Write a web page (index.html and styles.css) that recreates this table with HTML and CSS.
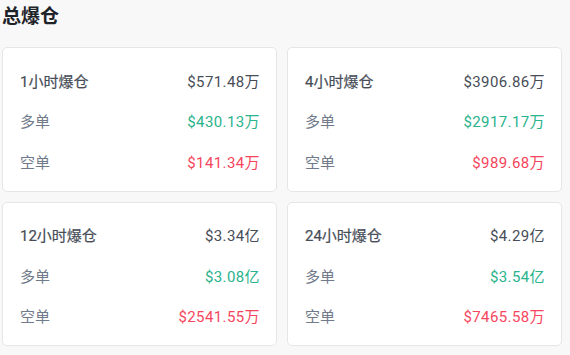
FILE: index.html
```html
<!DOCTYPE html>
<html lang="zh">
<head>
<meta charset="utf-8">
<link rel="stylesheet" href="styles.css">
</head>
<body>
<div class="page">
  <h2 class="title">总爆仓</h2>
  <div class="grid">
    <div class="card">
      <div class="row head"><span>1小时爆仓</span><span class="val">$571.48万</span></div>
      <div class="row"><span>多单</span><span class="val up">$430.13万</span></div>
      <div class="row"><span>空单</span><span class="val down">$141.34万</span></div>
    </div>
    <div class="card">
      <div class="row head"><span>4小时爆仓</span><span class="val">$3906.86万</span></div>
      <div class="row"><span>多单</span><span class="val up">$2917.17万</span></div>
      <div class="row"><span>空单</span><span class="val down">$989.68万</span></div>
    </div>
    <div class="card">
      <div class="row head"><span>12小时爆仓</span><span class="val">$3.34亿</span></div>
      <div class="row"><span>多单</span><span class="val up">$3.08亿</span></div>
      <div class="row"><span>空单</span><span class="val down">$2541.55万</span></div>
    </div>
    <div class="card">
      <div class="row head"><span>24小时爆仓</span><span class="val">$4.29亿</span></div>
      <div class="row"><span>多单</span><span class="val up">$3.54亿</span></div>
      <div class="row"><span>空单</span><span class="val down">$7465.58万</span></div>
    </div>
  </div>
</div>
</body>
</html>
```
FILE: styles.css
```css
html, body {
  margin: 0;
  padding: 0;
  background: #f8f8f8;
}
body {
  font-family: Roboto, "Noto Sans CJK SC", sans-serif;
  color: #707a8a;
}
.page {
  width: 560px;
  padding: 0 8px 0 2px;
}
.title {
  margin: 0;
  height: 32px;
  line-height: 30px;
  font-size: 19px;
  font-weight: 700;
  color: #1e2329;
  font-family: "Noto Sans CJK SC", sans-serif;
}
.grid {
  margin-top: 15px;
  display: grid;
  grid-template-columns: 1fr 1fr;
  gap: 10px;
}
.card {
  background: #fff;
  border: 1px solid #e6e6e6;
  border-radius: 5px;
  padding: 12px 16px 9px 17px;
}
.row {
  height: 40.5px;
  display: flex;
  align-items: center;
  justify-content: space-between;
  font-size: 15px;
}
.row.head {
  color: #474d57;
}
.row.head span:first-child {
  -webkit-text-stroke: 0.2px #474d57;
}
.val {
  letter-spacing: 0.4px;
}
.up { color: #2ab38c; }
.down { color: #f6465d; }
```
